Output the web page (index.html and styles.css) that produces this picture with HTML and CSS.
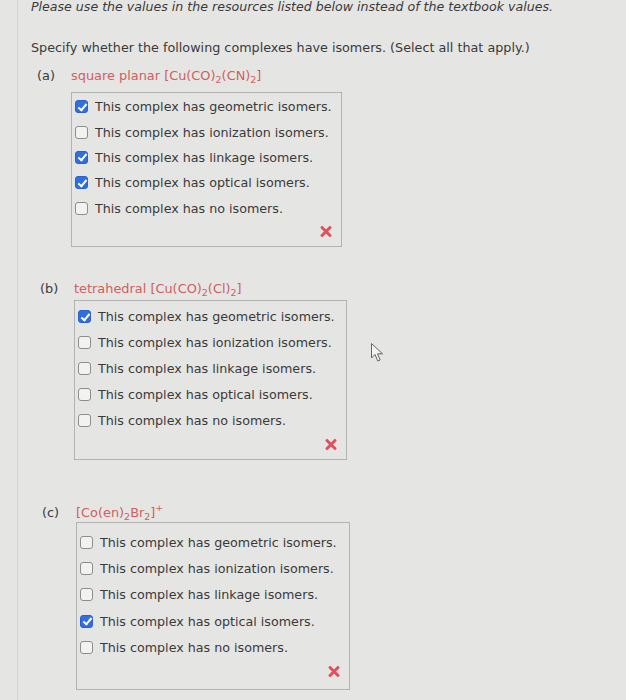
FILE: index.html
```html
<!DOCTYPE html>
<html>
<head>
<meta charset="utf-8">
<link rel="stylesheet" href="styles.css">
</head>
<body>
<div class="page">
  <p class="note">Please use the values in the resources listed below instead of the textbook values.</p>
  <p class="intro">Specify whether the following complexes have isomers. (Select all that apply.)</p>

  <section class="part part-a">
    <div class="label"><span class="letter">(a)</span><span class="formula">square planar [Cu(CO)<sub>2</sub>(CN)<sub>2</sub>]</span></div>
    <div class="box">
      <div class="row"><span class="cb on"></span><span>This complex has geometric isomers.</span></div>
      <div class="row"><span class="cb"></span><span>This complex has ionization isomers.</span></div>
      <div class="row"><span class="cb on"></span><span>This complex has linkage isomers.</span></div>
      <div class="row"><span class="cb on"></span><span>This complex has optical isomers.</span></div>
      <div class="row"><span class="cb"></span><span>This complex has no isomers.</span></div>
      <div class="mark"><span class="x"></span></div>
    </div>
  </section>

  <section class="part part-b">
    <div class="label"><span class="letter">(b)</span><span class="formula">tetrahedral [Cu(CO)<sub>2</sub>(Cl)<sub>2</sub>]</span></div>
    <div class="box">
      <div class="row"><span class="cb on"></span><span>This complex has geometric isomers.</span></div>
      <div class="row"><span class="cb"></span><span>This complex has ionization isomers.</span></div>
      <div class="row"><span class="cb"></span><span>This complex has linkage isomers.</span></div>
      <div class="row"><span class="cb"></span><span>This complex has optical isomers.</span></div>
      <div class="row"><span class="cb"></span><span>This complex has no isomers.</span></div>
      <div class="mark"><span class="x"></span></div>
    </div>
  </section>

  <section class="part part-c">
    <div class="label"><span class="letter">(c)</span><span class="formula">[Co(en)<sub>2</sub>Br<sub>2</sub>]<sup>+</sup></span></div>
    <div class="box">
      <div class="row"><span class="cb"></span><span>This complex has geometric isomers.</span></div>
      <div class="row"><span class="cb"></span><span>This complex has ionization isomers.</span></div>
      <div class="row"><span class="cb"></span><span>This complex has linkage isomers.</span></div>
      <div class="row"><span class="cb on"></span><span>This complex has optical isomers.</span></div>
      <div class="row"><span class="cb"></span><span>This complex has no isomers.</span></div>
      <div class="mark"><span class="x"></span></div>
    </div>
  </section>

  <svg class="cursor" width="16" height="22" viewBox="0 0 16 22">
    <path d="M1.5 1.5 L1.5 16 L5 12.5 L7.8 19 L10.2 18 L7.5 11.8 L12.5 11.8 Z" fill="#f2f2f2" stroke="#666" stroke-width="1" stroke-linejoin="round"/>
  </svg>
</div>
</body>
</html>
```

FILE: styles.css
```css
html, body {
  margin: 0;
  padding: 0;
}
body {
  background: #e5e5e3;
  font-family: "DejaVu Sans", Verdana, sans-serif;
  color: #3a3a3a;
  width: 626px;
  height: 700px;
  overflow: hidden;
}
.page {
  position: relative;
  height: 700px;
  border-left: 1px solid #d6d6d4;
  margin-left: 17px;
  padding-left: 13px;
}
.note {
  margin: 0;
  font-style: italic;
  font-size: 12.6px;
  line-height: 13px;
}
.intro {
  margin: 27px 0 0;
  font-size: 12.75px;
  line-height: 16px;
}
.part {
  display: flex;
  flex-direction: column;
}
.label {
  display: flex;
  align-items: baseline;
  font-size: 12.9px;
  line-height: 16px;
}
.letter {
  width: 34px;
}
.formula {
  color: #cf5f60;
}
sub {
  font-size: 9.5px;
  vertical-align: -3px;
  line-height: 0;
}
sup {
  font-size: 9.5px;
  vertical-align: 6px;
  line-height: 0;
}
.part-a { margin-top: 12px; padding-left: 6px; }
.part-b { margin-top: 34px; padding-left: 9px; }
.part-c { margin-top: 45px; padding-left: 11px; }

.box {
  margin-left: 34px;
  width: 266px;
  border: 1px solid #b3b3b1;
  display: flex;
  flex-direction: column;
  padding: 1px 0 3px 3px;
  margin-top: 8px;
}
.part-b .box { width: 268px; padding-top: 3px; margin-top: 3px; }
.part-c .box { width: 269px; padding-top: 6px; padding-bottom: 6px; margin-top: 1px; }
.part-b .row { height: 26px; }
.part-c .row { height: 26.4px; }

.row {
  display: flex;
  align-items: center;
  gap: 7px;
  height: 25.4px;
  font-size: 12.7px;
  color: #3a3a3a;
}
.cb {
  width: 11px;
  height: 11px;
  border: 1px solid #8d8d8d;
  border-radius: 3px;
  background: #f2f2f0;
  flex: none;
  position: relative;
}
.cb.on {
  background: #2f6fe0;
  border-color: #2a60c8;
}
.cb.on::after {
  content: "";
  position: absolute;
  left: 3.5px;
  top: 0.5px;
  width: 3px;
  height: 7px;
  border: solid #fff;
  border-width: 0 2px 2px 0;
  transform: rotate(40deg);
}
.mark {
  display: flex;
  justify-content: flex-end;
  align-items: center;
  height: 22px;
  padding-right: 9px;
}
.x {
  width: 12px;
  height: 12px;
  position: relative;
}
.x::before, .x::after {
  content: "";
  position: absolute;
  left: -1px;
  top: 4.5px;
  width: 14px;
  height: 3px;
  background: #e2505c;
  border-radius: 1px;
  transform: rotate(45deg);
}
.x::after {
  transform: rotate(-45deg);
}
.cursor {
  position: absolute;
  left: 352px;
  top: 342px;
}
```
